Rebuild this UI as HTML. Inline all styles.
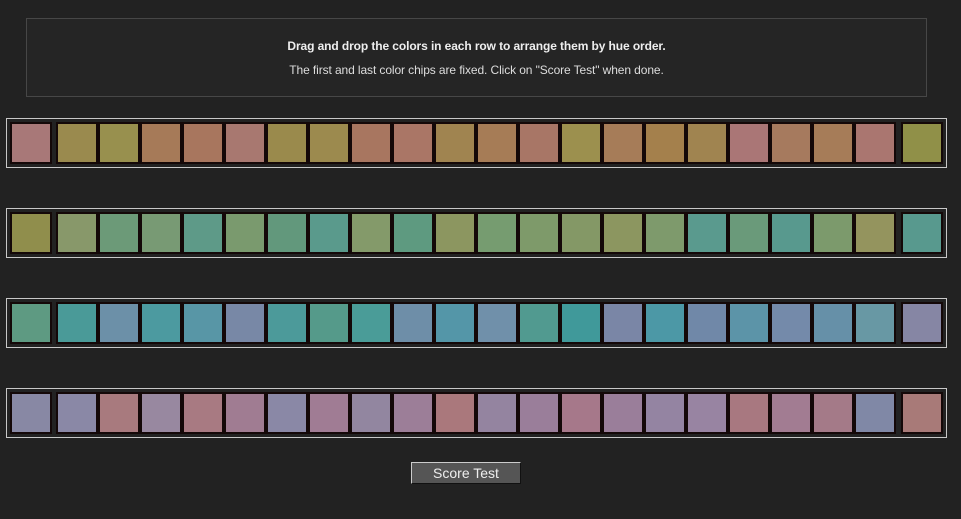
<!DOCTYPE html><html><head><style>
body{margin:0;background:#222;width:961px;height:519px;overflow:hidden;font-family:"Liberation Sans",Arial,sans-serif;position:relative}
.box{position:absolute;left:26px;top:18px;width:899px;height:77px;border:1px solid #474747;background:#252525;color:#eee;text-align:center;font-size:12px;letter-spacing:-0.1px}
.box b{position:absolute;top:20px;left:0;right:0}
.box span{position:absolute;top:44px;left:0;right:0;color:#ddd}
.row{position:absolute;left:6px;width:939px;height:48px;border:1px solid #c8c8c8}
.c{position:absolute;top:3px;width:38px;height:38px;border:2px solid #140808}
.btn{position:absolute;left:411px;top:462px;width:108px;height:20px;background:#555;border-top:1px solid #ccc;border-left:1px solid #ccc;border-right:1px solid #111;border-bottom:1px solid #111;color:#eee;font-size:14px;text-align:center;line-height:20px}
</style></head><body>
<div class="box"><b>Drag and drop the colors in each row to arrange them by hue order.</b><span>The first and last color chips are fixed. Click on "Score Test" when done.</span></div>
<div id="rows"></div>
<div class="btn">Score Test</div>
<script>
var R=[
["#a87878","#9a8a4e","#98904e","#a67a58","#a8765e","#a87870","#9a8a4c","#9c8a4e","#a87660","#aa7666","#a08450","#a67c56","#a87666","#9c904e","#a67c58","#a4804c","#a08450","#aa7676","#a67a5e","#a67c58","#aa7670","#909048"],
["#908e4c","#88986a","#6c9a78","#789a74","#5e9a88","#7a9a6e","#62987c","#5a9a8c","#849a6a","#5e9a80","#8c9660","#769c70","#7e9a6a","#849866","#8c9660","#7e9a6c","#5a9a8e","#6a9a7a","#58998e","#7c9a6c","#94945e","#58998e"],
["#5e9a82","#4a9a98","#6c90a8","#4c9aa0","#5896a6","#7888a6","#4c9a9a","#559a8a","#4a9c98","#6e8ea8","#5496a8","#7090aa","#519a90","#40999a","#7a86a6","#4c98a6","#7088a8","#5c94a8","#748aaa","#6690a8","#6898a4","#8686a4"],
["#8888a4","#8a88a6","#a87a7e","#9888a0","#a87a82","#a07c92","#8a88a6","#a07c94","#9286a0","#9c7e98","#aa787c","#9484a0","#9a7e9a","#a6788a","#9a7e9a","#9484a2","#9884a2","#a87880","#a27c92","#a47a88","#8088a6","#a87a78"]];
var h="";var tops=[118,208,298,388];
R.forEach(function(r,i){h+='<div class="row" style="top:'+tops[i]+'px">';
r.forEach(function(c,j){var x=j==0?3:(j==21?894:49+(j-1)*42);h+='<div class="c" style="left:'+x+'px;background:'+c+'"></div>';});h+='</div>';});
document.getElementById("rows").innerHTML=h;
</script>
</body></html>
